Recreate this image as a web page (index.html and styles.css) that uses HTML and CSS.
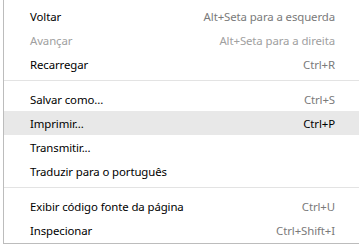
FILE: index.html
```html
<!DOCTYPE html>
<html lang="pt-BR">
<head>
<meta charset="utf-8">
<link rel="stylesheet" href="styles.css">
</head>
<body>
<div class="menu">
  <div class="item"><span class="label">Voltar</span><span class="key">Alt+Seta para a esquerda</span></div>
  <div class="item disabled"><span class="label">Avançar</span><span class="key">Alt+Seta para a direita</span></div>
  <div class="item"><span class="label">Recarregar</span><span class="key">Ctrl+R</span></div>
  <div class="sep"></div>
  <div class="item"><span class="label">Salvar como...</span><span class="key">Ctrl+S</span></div>
  <div class="item hover"><span class="label">Imprimir...</span><span class="key">Ctrl+P</span></div>
  <div class="item"><span class="label">Transmitir...</span><span class="key"></span></div>
  <div class="item"><span class="label">Traduzir para o português</span><span class="key"></span></div>
  <div class="sep"></div>
  <div class="item"><span class="label">Exibir código fonte da página</span><span class="key">Ctrl+U</span></div>
  <div class="item"><span class="label">Inspecionar</span><span class="key">Ctrl+Shift+I</span></div>
</div>
</body>
</html>
```
FILE: styles.css
```css
html, body {
  margin: 0;
  padding: 0;
  background: #ffffff;
  overflow: hidden;
}
body {
  font-family: "Noto Sans", "Open Sans", sans-serif;
  font-size: 11.4px;
  letter-spacing: -0.1px;
  color: #000000;
}
.menu {
  margin-left: 3px;
  border-left: 1px solid #bcbcbc;
  border-bottom: 1px solid #bcbcbc;
  padding: 4px 0 1px 0;
  width: 355px;
}
.item {
  display: flex;
  justify-content: space-between;
  align-items: center;
  height: 24px;
  padding: 0 24px 0 26px;
}
.key {
  color: #7a7a7a;
}
.disabled .label, .disabled .key {
  color: #a0a0a0;
}
.hover {
  background: #e8e8e8;
}
.hover .key {
  color: #000000;
}
.sep {
  height: 1px;
  background: #e3e3e3;
  margin: 4px 0 6px 0;
}
```
